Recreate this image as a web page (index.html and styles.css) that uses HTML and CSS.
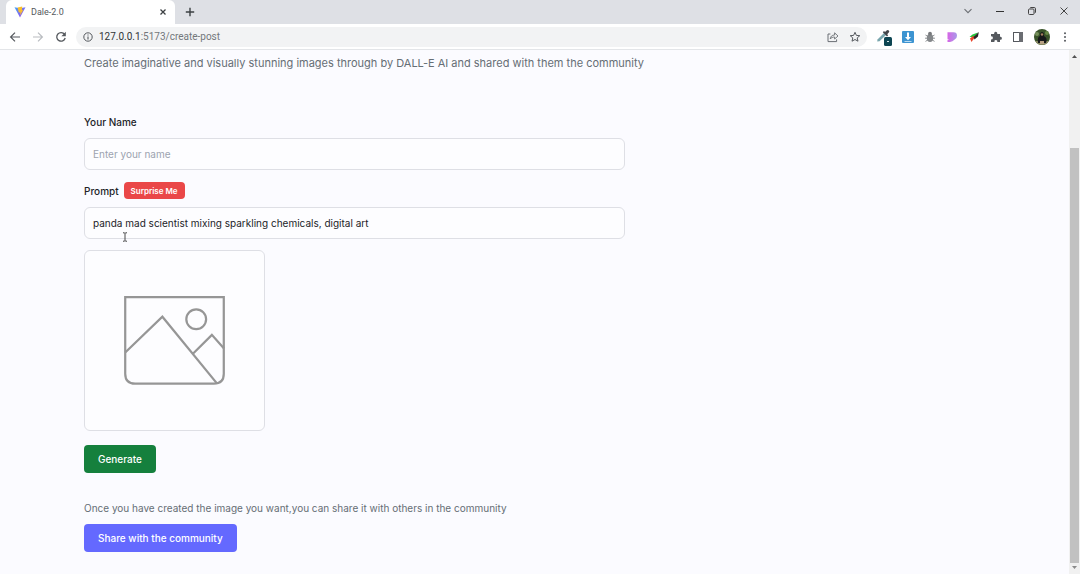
FILE: index.html
```html
<!DOCTYPE html>
<html lang="en">
<head>
  <meta charset="UTF-8" />
  <meta name="viewport" content="width=device-width, initial-scale=1.0" />
  <title>Dale-2.0</title>
  <link rel="stylesheet" href="styles.css">
</head>
<body>
  <div class="browser">
    <!-- Tab strip -->
    <header class="tabstrip">
      <div class="tab">
        <svg class="favicon" viewBox="0 0 12 12">
          <defs>
            <linearGradient id="vite" x1="0" y1="0" x2="1" y2="1">
              <stop offset="0" stop-color="#41a5f5" />
              <stop offset="1" stop-color="#a63ff0" />
            </linearGradient>
          </defs>
          <path d="M0.5 1.2 6 2.2l5.5-1L6 11.6z" fill="url(#vite)" />
          <path d="M3.6 1.4 8.2 0.6 8 4.2l1.2-.2L6 9.6l.4-3.4-1.6.3z" fill="#fbbf2d" />
        </svg>
        <span class="tab-title">Dale-2.0</span>
        <button class="icon-btn" aria-label="Close tab">
          <svg width="8" height="8" viewBox="0 0 8 8"><path d="M1.5 1.5l5 5M6.5 1.5l-5 5" stroke="#3c4043" stroke-width="1.3" /></svg>
        </button>
      </div>
      <button class="icon-btn new-tab" aria-label="New tab">
        <svg width="10" height="10" viewBox="0 0 10 10"><path d="M5 .8v8.4M.8 5h8.4" stroke="#3c4043" stroke-width="1.4" /></svg>
      </button>
      <div class="window-controls">
        <button class="icon-btn" aria-label="Search tabs">
          <svg width="10" height="10" viewBox="0 0 10 10" fill="none"><path d="M1.5 3.2 5 6.7l3.5-3.5" stroke="#6b6f74" stroke-width="1.1" /></svg>
        </button>
        <button class="icon-btn" aria-label="Minimize">
          <svg width="10" height="10" viewBox="0 0 10 10"><path d="M1 5.5h8" stroke="#333" /></svg>
        </button>
        <button class="icon-btn" aria-label="Restore">
          <svg width="10" height="10" viewBox="0 0 10 10" fill="none" stroke="#444"><rect x="1.5" y="3" width="5.5" height="5.5" rx="1" /><path d="M3 2.2q.2-.7 1-.7h3.2q1.3 0 1.3 1.3V6q0 .8-.8 1" /></svg>
        </button>
        <button class="icon-btn" aria-label="Close">
          <svg width="10" height="10" viewBox="0 0 10 10"><path d="M1.5 1.5l7 7M8.5 1.5l-7 7" stroke="#444" /></svg>
        </button>
      </div>
    </header>

    <!-- Toolbar -->
    <nav class="toolbar">
      <div class="nav-buttons">
        <button class="icon-btn" aria-label="Back">
          <svg width="12" height="12" viewBox="0 0 12 12" fill="none" stroke="#55595e" stroke-width="1.2"><path d="M11 6H1.8M6 1.6 1.6 6 6 10.4" /></svg>
        </button>
        <button class="icon-btn" aria-label="Forward">
          <svg width="12" height="12" viewBox="0 0 12 12" fill="none" stroke="#b9bcc0" stroke-width="1.2"><path d="M1 6h9.2M6 1.6 10.4 6 6 10.4" /></svg>
        </button>
        <button class="icon-btn" aria-label="Reload">
          <svg width="12" height="12" viewBox="0 0 12 12" fill="none" stroke="#55595e" stroke-width="1.3"><path d="M9.6 3.4A4.3 4.3 0 1 0 10.2 7" /><path d="M10.8.8v4.4H6.4z" fill="#55595e" stroke="none" /></svg>
        </button>
      </div>
      <div class="omnibox">
        <svg width="10" height="10" viewBox="0 0 10 10" fill="none" stroke="#55595e"><circle cx="5" cy="5" r="4.2" /><path d="M5 4.4v3M5 2.4v1.1" stroke-width="1.1" /></svg>
        <span class="url"><b>127.0.0.1</b>:5173/create-post</span>
        <button class="icon-btn" aria-label="Share">
          <svg width="12" height="12" viewBox="0 0 12 12" fill="none" stroke="#6b6f74"><path d="M3.400 3H1v7.600h8.600V8.400" /><path d="M3.200 8c.3-2.700 1.800-4 4.400-4V1.800L11 5 7.600 8V6C5.600 6 4.200 6.600 3.200 8z" stroke-linejoin="round" stroke-width=".9" /></svg>
        </button>
        <button class="icon-btn" aria-label="Bookmark">
          <svg width="12" height="12" viewBox="0 0 12 12" fill="none" stroke="#55595e"><path d="M6 1.300l1.400 3.100 3.400.3-2.600 2.200.8 3.300L6 8.500l-3 1.700.8-3.300L1.200 4.700l3.400-.3z" /></svg>
        </button>
      </div>
      <div class="extensions">
        <button class="icon-btn" aria-label="Color picker">
          <svg width="16" height="18" viewBox="0 0 16 18"><path d="M1.500 11.500 8 5l2 2-6.500 6.200-2.300.4z" fill="#79a6ad" /><path d="M6.800 4.200 8 3l1 1 1.600-1.600q1.200-1 2.200 0 1 1 0 2.200L11.200 6.200l1 1L11 8.400z" fill="#42454a" /><rect x="8" y="9" width="8" height="9" rx="1.500" fill="#0d4552" /><path d="M11 13.500h2" stroke="#d7e6e8" /></svg>
        </button>
        <button class="icon-btn" aria-label="Downloader">
          <svg width="12" height="12" viewBox="0 0 12 12"><rect width="12" height="12" rx="1" fill="#3d94d1" /><path d="M5 1.500h2v4.500h2L6 9.200 3 6h2z" fill="#fff" /><path d="M2.500 10.500h7" stroke="#b9dbf2" /></svg>
        </button>
        <button class="icon-btn" aria-label="Debugger">
          <svg width="12" height="12" viewBox="0 0 12 12" stroke="#85888b" stroke-width=".9"><ellipse cx="6" cy="7" rx="3.200" ry="3.900" fill="#85888b" stroke="none" /><circle cx="6" cy="2.700" r="1.900" fill="#77797c" stroke="none" /><path d="M1.500 4 4 5.500M1 7.200h10M1.500 10.400 4 8.800M10.500 4 8 5.500M10.500 10.400 8 8.800" /></svg>
        </button>
        <button class="icon-btn" aria-label="Notes">
          <svg width="12" height="12" viewBox="0 0 12 12"><defs><linearGradient id="violet"><stop offset="0" stop-color="#d665e6" /><stop offset="1" stop-color="#a89be8" /></linearGradient></defs><path d="M1.500 1.300H7.500q3.500 0 3.500 3.400 0 2.600-2.300 3.900Q6.500 11 4 11H1.500V8.800L3.300 8H1.500z" fill="url(#violet)" /></svg>
        </button>
        <button class="icon-btn" aria-label="Bird">
          <svg width="12" height="12" viewBox="0 0 12 12"><path d="M1.500 6 4.500 3.500 10 1.500 6.500 6z" fill="#25c63f" /><path d="M2 7.500 5 5l2 1-3.500 5z" fill="#e8452b" /><path d="M5.500 6 10.800 1 10 5.500 6.500 8.500z" fill="#2a2424" /></svg>
        </button>
        <button class="icon-btn" aria-label="Extensions">
          <svg width="12" height="12" viewBox="0 0 12 12" fill="#55595e"><path d="M1 3h3.200a1.600 1.600 0 1 1 3 0H10v2.800a1.500 1.500 0 1 1 0 2.900V11H7.300a1.500 1.500 0 1 0-2.900 0H1V8.300a1.500 1.500 0 1 0 0-2.900z" /></svg>
        </button>
        <button class="icon-btn" aria-label="Side panel">
          <svg width="12" height="12" viewBox="0 0 12 12"><rect x="1.500" y="1.500" width="9" height="9" fill="none" stroke="#55595e" /><path d="M7 1h4v10H7z" fill="#6a6d72" /></svg>
        </button>
        <button class="icon-btn" aria-label="Profile">
          <svg width="16" height="16" viewBox="0 0 16 16"><defs><clipPath id="round"><circle cx="8" cy="8" r="8" /></clipPath></defs><g clip-path="url(#round)"><path d="M0 0h16v16H0z" fill="#39532a" /><circle cx="3" cy="5" r="2" fill="#76905a" /><circle cx="13" cy="4" r="2" fill="#688a46" /><path d="M0 12h16v4H0z" fill="#8b8b64" /><path d="M4 14q-1-6 2-7 0-4 2-4t2 4q4 2 2 7z" fill="#17191b" /><circle cx="8" cy="5.500" r="1.200" fill="#a5805e" /><path d="M6 12h4v3H6z" fill="#b7a184" /></g></svg>
        </button>
        <button class="icon-btn" aria-label="Menu">
          <svg width="10" height="12" viewBox="0 0 10 12" fill="#55595e"><circle cx="5" cy="2.200" r="1" /><circle cx="5" cy="6" r="1" /><circle cx="5" cy="9.800" r="1" /></svg>
        </button>
      </div>
    </nav>

    <!-- Page -->
    <div class="viewport">
      <main class="page">
        <p class="intro">Create imaginative and visually stunning images through by DALL-E AI and shared with them the community</p>

        <form class="form">
          <div class="label-row">
            <label for="name">Your Name</label>
          </div>
          <input id="name" class="field" type="text" placeholder="Enter your name">

          <div class="label-row">
            <label for="prompt">Prompt</label>
            <button type="button" class="surprise">Surprise Me</button>
          </div>
          <div class="prompt-wrap">
            <input id="prompt" class="field" type="text" value="panda mad scientist mixing sparkling chemicals, digital art">
            <svg class="cursor" width="6" height="10" viewBox="0 0 6 10" fill="none" stroke="#333" stroke-width=".9"><path d="M1 .8h1.500L3 1.300l.5-.5H5M3 1.300v7.400M1 9.200h1.500L3 8.700l.5.5H5" /></svg>
          </div>

          <div class="preview">
            <svg viewBox="0 0 100 88" fill="none" stroke="#969696" stroke-width="2.200">
              <path d="M1.200 1.200h97.600V77q0 9.800-9.800 9.800H11q-9.800 0-9.800-9.800z" />
              <path d="M1.200 56 38 20.500 92 86.500M68.500 57 87 38.500 99 52" />
              <circle cx="71.500" cy="23" r="9.800" />
            </svg>
          </div>

          <button type="button" class="btn generate">Generate</button>

          <p class="note">Once you have created the image you want,you can share it with others in the community</p>
          <button type="submit" class="btn share">Share with the community</button>
        </form>
      </main>

      <div class="scrollbar">
        <svg width="7" height="4" viewBox="0 0 7 4"><path d="M1 4 3.500 1 6 4z" fill="#505050" /></svg>
        <div class="thumb"></div>
        <svg width="7" height="4" viewBox="0 0 7 4"><path d="M1 0 3.500 3 6 0z" fill="#8a8a8a" /></svg>
      </div>
    </div>
  </div>
</body>
</html>
```
FILE: styles.css
```css
* { box-sizing: border-box }
body { margin: 0; font-family: Inter, sans-serif; color: #222328; background: #fbfbff }
p { margin: 0 }
svg { display: block; flex: none }
button { font-family: inherit; border: 0; cursor: pointer }

.browser { display: flex; flex-direction: column; height: 100vh; overflow: hidden }
.icon-btn { display: flex; align-items: center; justify-content: center; padding: 0; background: none }

/* Tab strip */
.tabstrip { display: flex; align-items: center; height: 24px; flex: none; background: #dee0e5; padding-left: 6px; font-family: Roboto, sans-serif }
.tab { display: flex; align-items: center; width: 169px; height: 24px; padding: 0 8px; background: #fff; border-radius: 6px 6px 0 0 }
.favicon { width: 12px; height: 12px }
.tab-title { flex: 1; margin-left: 5px; font-size: 9px; line-height: 12px; color: #55585c }
.new-tab { margin-left: 10px }
.window-controls { display: flex; gap: 22px; margin-left: auto; padding: 0 11px 3px 0 }

/* Toolbar */
.toolbar { display: flex; align-items: center; height: 26px; flex: none; background: #fff; border-bottom: 1px solid #e3e5e8; padding: 0 10px 0 9px }
.nav-buttons { display: flex; gap: 11px }
.omnibox { display: flex; align-items: center; flex: 1; height: 20px; margin: 0 9px 0 9px; padding: 0 6px 0 7px; border-radius: 10px; background: #f2f3f4 }
.url { flex: 1; margin-left: 6px; font-family: Roboto, sans-serif; font-size: 10px; line-height: 14px; color: #73777b }
.url b { font-weight: 400; color: #303337 }
.omnibox .icon-btn + .icon-btn { margin-left: 10px }
.extensions { display: flex; align-items: center; gap: 10px }

/* Page */
.viewport { display: flex; flex: 1; min-height: 0 }
.page { flex: 1; padding: 5px 84px 0; overflow: hidden }
.intro { font-size: 11px; line-height: 16px; color: #666e75 }
.form { display: flex; flex-direction: column; align-items: flex-start; max-width: 541px; margin-top: 42px }
.label-row { display: flex; align-items: center; gap: 5px; height: 17px; margin-bottom: 8px; font-size: 10px; font-weight: 500 }
.surprise { height: 17px; padding: 0 7px; border-radius: 4px; background: #ea4748; color: #fff; font-size: 8px; font-weight: 600 }
.field { display: block; width: 100%; height: 32px; padding: 0 8px; border: 1px solid #dedfe5; border-radius: 6px; background: #fdfdff; color: #222328; font-family: inherit; font-size: 10px; outline: none }
.field::placeholder { color: #9ca3af; opacity: 1 }
.form > .field { margin-bottom: 12px }
.prompt-wrap { position: relative; width: 100% }
.cursor { position: absolute; left: 38px; top: 25px }
.preview { display: flex; align-items: center; justify-content: center; width: 181px; height: 181px; margin-top: 11px; border: 1px solid #dedfe5; border-radius: 6px; background: #fdfdff }
.preview svg { width: 101px }
.btn { height: 28px; padding: 0 14px; border-radius: 4px; color: #fff; font-size: 10px; font-weight: 500 }
.generate { margin-top: 14px; background: #15803d }
.note { margin: 28px 0 8px; font-size: 10px; line-height: 15px; color: #666e75 }
.share { background: #6469ff }

/* Scrollbar */
.scrollbar { display: flex; flex-direction: column; align-items: center; width: 11px; padding: 4px 0; background: #f1f1f1 }
.thumb { flex: 1; width: 9px; margin: 90px 0 3px; background: #c1c1c1 }
```
